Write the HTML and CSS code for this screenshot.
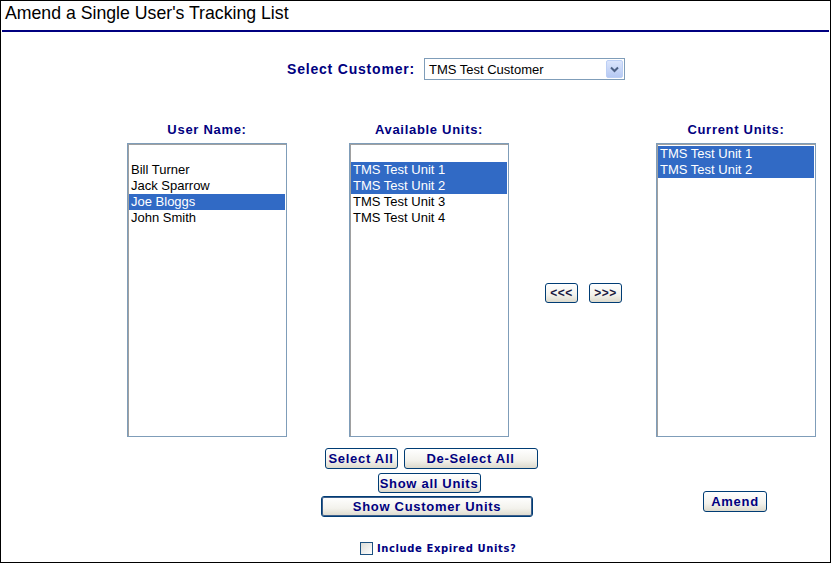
FILE: index.html
```html
<!DOCTYPE html>
<html lang="en">
<head>
  <meta charset="UTF-8" />
  <title>Amend a Single User's Tracking List</title>
  <link rel="stylesheet" href="styles.css">
</head>
<body>

<div class="page">
  <div class="title">Amend a Single User's Tracking List</div>

  <div class="customer-row">
    <span class="field-label">Select Customer:</span>
    <div class="dropdown">
      <span class="dropdown-text">TMS Test Customer</span>
      <span class="dropdown-btn">
        <svg width="9" height="7" viewBox="0 0 9 7"><path d="M1 1.5 L4.5 5 L8 1.5" fill="none" stroke="#4d6185" stroke-width="2"/></svg>
      </span>
    </div>
  </div>

  <div class="lists">
    <div class="col-label c1">User Name:</div>
    <div class="col-label c2">Available Units:</div>
    <div class="col-label c3">Current Units:</div>

    <div class="listbox c1">
      <div class="item">&nbsp;</div>
      <div class="item">Bill Turner</div>
      <div class="item">Jack Sparrow</div>
      <div class="item selected">Joe Bloggs</div>
      <div class="item">John Smith</div>
    </div>

    <div class="listbox c2">
      <div class="item">&nbsp;</div>
      <div class="item selected">TMS Test Unit 1</div>
      <div class="item selected">TMS Test Unit 2</div>
      <div class="item">TMS Test Unit 3</div>
      <div class="item">TMS Test Unit 4</div>
    </div>

    <div class="arrows">
      <button class="btn arrow">&lt;&lt;&lt;</button>
      <button class="btn arrow">&gt;&gt;&gt;</button>
    </div>

    <div class="listbox c3">
      <div class="item selected">TMS Test Unit 1</div>
      <div class="item selected">TMS Test Unit 2</div>
    </div>

    <div class="unit-actions c2">
      <div class="btn-row">
        <button class="btn btn-select">Select All</button>
        <button class="btn btn-deselect">De-Select All</button>
      </div>
      <button class="btn btn-showall">Show all Units</button>
      <button class="btn btn-customer">Show Customer Units</button>
    </div>

    <div class="amend-cell c3">
      <button class="btn btn-amend">Amend</button>
    </div>
  </div>

  <label class="expired">
    <span class="checkbox"></span>
    <span>Include Expired Units?</span>
  </label>
</div>

</body>
</html>
```

FILE: styles.css
```css
body {
  margin: 0;
  font-family: "Liberation Sans", Arial, sans-serif;
  background: white;
}
.page {
  box-sizing: border-box;
  width: 831px;
  height: 563px;
  border: 1px solid #000;
  background: white;
}
.title {
  height: 29px;
  line-height: 25px;
  padding-left: 3px;
  font-family: "Liberation Sans", Arial, sans-serif;
  font-size: 17.7px;
  color: #000;
  border-bottom: 2px solid #000080;
  margin: 0 1px;
}
.customer-row {
  display: flex;
  align-items: center;
  gap: 9px;
  padding-left: 286px;
  margin-top: 26px;
}
.field-label {
  font-size: 14px;
  font-weight: bold;
  letter-spacing: 0.8px;
  color: #000080;
}
.dropdown {
  box-sizing: border-box;
  width: 201px;
  height: 22px;
  border: 1px solid #7f9db9;
  display: flex;
  align-items: center;
  justify-content: space-between;
  padding: 1px 1px 1px 4px;
}
.dropdown-text {
  font-size: 13px;
  color: #000;
}
.dropdown-btn {
  box-sizing: border-box;
  width: 17px;
  height: 18px;
  border: 1px solid #bccff5;
  border-radius: 2px;
  background: linear-gradient(#dbe5fc, #b6c9f3);
  display: flex;
  align-items: center;
  justify-content: center;
}
.lists {
  display: grid;
  grid-template-columns: 126px 160px 62px 160px 147px 160px;
  margin-top: 42px;
}
.c1 { grid-column: 2; }
.c2 { grid-column: 4; }
.c3 { grid-column: 6; }
.col-label {
  grid-row: 1;
  text-align: center;
  font-size: 13px;
  font-weight: bold;
  letter-spacing: 0.7px;
  color: #000080;
  line-height: 16px;
  margin-bottom: 5px;
}
.listbox {
  grid-row: 2;
  box-sizing: border-box;
  height: 294px;
  border: 1px solid #7f9db9;
  box-shadow: inset 1px 1px 0 #a0a0a0;
  padding: 2px 1px;
}
.item {
  height: 16px;
  line-height: 16px;
  padding-left: 2px;
  font-size: 13px;
  color: #000;
  white-space: nowrap;
}
.item.selected {
  background: #316ac5;
  color: white;
}
.arrows {
  grid-row: 2;
  grid-column: 5;
  display: flex;
  align-items: center;
  justify-content: center;
  gap: 11px;
  padding-top: 5px;
  padding-left: 2px;
}
.btn {
  box-sizing: border-box;
  font-family: "Liberation Sans", Arial, sans-serif;
  font-size: 13px;
  font-weight: bold;
  letter-spacing: 0.7px;
  color: #000080;
  height: 21px;
  padding: 0;
  border: 1px solid #003c74;
  border-radius: 3px;
  background: linear-gradient(#ffffff, #f3f2ec 60%, #dcd9cc);
  cursor: pointer;
}
.btn.arrow {
  width: 33px;
  height: 20px;
  font-weight: bold;
  font-size: 12px;
  letter-spacing: 0.5px;
  color: #1a1a40;
}
.unit-actions {
  grid-row: 3;
  display: flex;
  flex-direction: column;
  align-items: center;
  margin-top: 11px;
}
.btn-row {
  display: flex;
  gap: 6px;
  margin-left: 4px;
}
.btn-select { width: 73px; }
.btn-deselect { width: 134px; }
.btn-showall {
  width: 103px;
  height: 20px;
  margin-top: 4px;
}
.btn-customer {
  width: 212px;
  margin-top: 3px;
  margin-left: -4px;
  box-shadow: inset 0 0 0 1px #3d5f8c;
}
.amend-cell {
  grid-row: 3;
  display: flex;
  justify-content: center;
  padding-top: 54px;
}
.btn-amend {
  width: 64px;
  margin-left: -2px;
}
.expired {
  display: flex;
  align-items: center;
  gap: 4px;
  margin-left: 359px;
  margin-top: 25px;
  font-family: "DejaVu Sans", Verdana, sans-serif;
  font-size: 10px;
  font-weight: bold;
  letter-spacing: 0.6px;
  color: #000080;
}
.checkbox {
  box-sizing: border-box;
  width: 13px;
  height: 13px;
  border: 1px solid #1c5180;
  background: linear-gradient(135deg, #dcdcd7, #ffffff);
}
```
